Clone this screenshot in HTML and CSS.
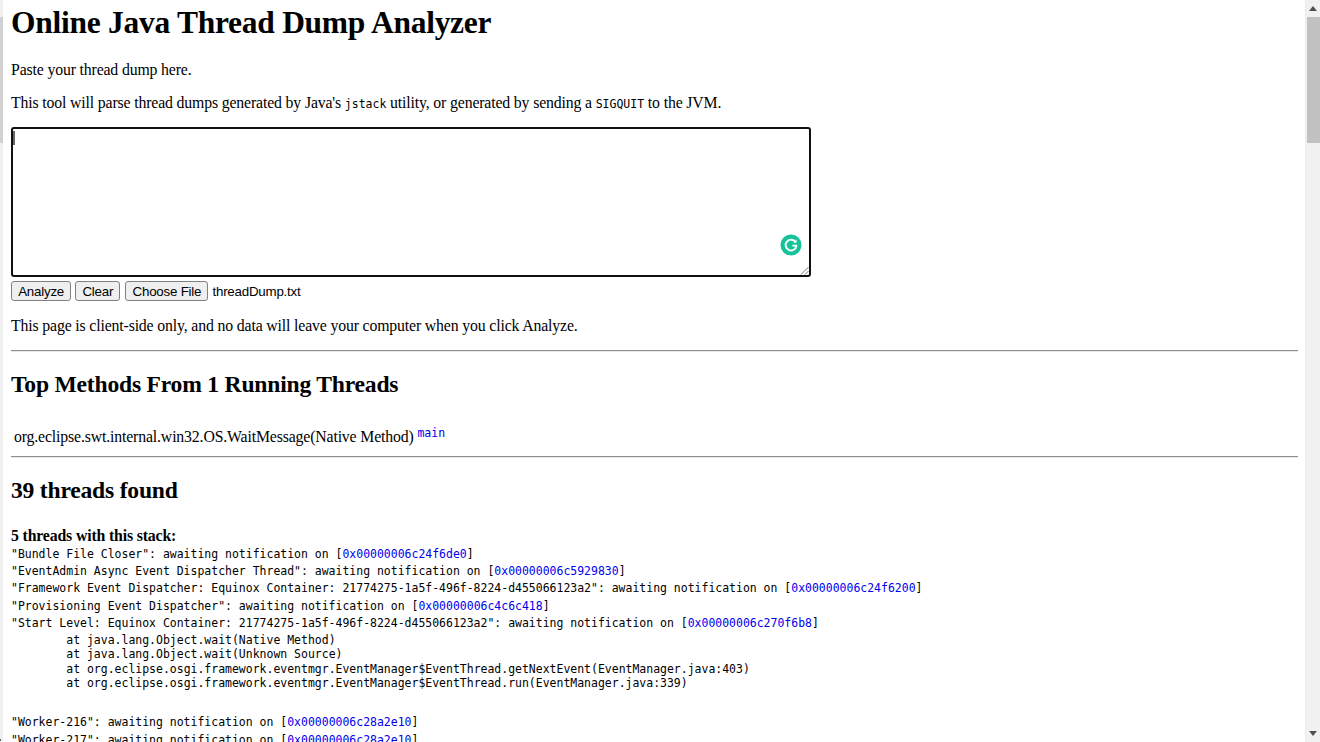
FILE: index.html
```html
<!DOCTYPE html>
<html lang="en">
<head>
<meta charset="utf-8">
<title>Online Java Thread Dump Analyzer</title>
<link rel="stylesheet" href="styles.css">
</head>
<body>
<div class="edge"></div>
<main class="page">
  <h1>Online Java Thread Dump Analyzer</h1>
  <p class="first">Paste your thread dump here.</p>
  <p class="intro">This tool will parse thread dumps generated by Java's <code>jstack</code> utility, or generated by sending a <code>SIGQUIT</code> to the JVM.</p>
  <div class="editor">
    <span class="caret"></span>
    <span class="grammarly">
      <svg viewBox="0 0 22 22" width="22" height="22"><circle cx="11" cy="11" r="10.5" fill="#15c39a"/><path d="M15.6 8.2A5.4 5.4 0 1 0 16.4 11.6H12.4" fill="none" stroke="#fff" stroke-width="1.9"/><path d="M13.4 8.6h3.2V5.4z" fill="#fff"/></svg>
    </span>
    <svg class="grip" viewBox="0 0 9 9" width="9" height="9"><path d="M8.5 1 1 8.5M8.5 5 5 8.5" stroke="#777" fill="none"/></svg>
  </div>
  <div class="controls">
    <button class="btn">Analyze</button>
    <button class="btn">Clear</button>
    <button class="btn file-btn">Choose File</button>
    <span class="filename">threadDump.txt</span>
  </div>
  <p class="note">This page is client-side only, and no data will leave your computer when you click Analyze.</p>
  <hr class="rule-a">
  <h2 class="h-top">Top Methods From 1 Running Threads</h2>
  <div class="method">org.eclipse.swt.internal.win32.OS.WaitMessage(Native Method) <a class="sup" href="#">main</a></div>
  <hr class="rule-b">
  <h2 class="h-found">39 threads found</h2>
  <div class="stack-title">5 threads with this stack:</div>
  <div class="line">"Bundle File Closer": awaiting notification on [<a href="#">0x00000006c24f6de0</a>]</div>
  <div class="line">"EventAdmin Async Event Dispatcher Thread": awaiting notification on [<a href="#">0x00000006c5929830</a>]</div>
  <div class="line">"Framework Event Dispatcher: Equinox Container: 21774275-1a5f-496f-8224-d455066123a2": awaiting notification on [<a href="#">0x00000006c24f6200</a>]</div>
  <div class="line">"Provisioning Event Dispatcher": awaiting notification on [<a href="#">0x00000006c4c6c418</a>]</div>
  <div class="line">"Start Level: Equinox Container: 21774275-1a5f-496f-8224-d455066123a2": awaiting notification on [<a href="#">0x00000006c270f6b8</a>]</div>
  <pre class="trace">	at java.lang.Object.wait(Native Method)
	at java.lang.Object.wait(Unknown Source)
	at org.eclipse.osgi.framework.eventmgr.EventManager$EventThread.getNextEvent(EventManager.java:403)
	at org.eclipse.osgi.framework.eventmgr.EventManager$EventThread.run(EventManager.java:339)</pre>
  <div class="line">"Worker-216": awaiting notification on [<a href="#">0x00000006c28a2e10</a>]</div>
  <div class="line">"Worker-217": awaiting notification on [<a href="#">0x00000006c28a2e10</a>]</div>
</main>
<aside class="scrollbar">
  <span class="arrow up"></span>
  <div class="track"><div class="thumb"></div></div>
  <span class="arrow down"></span>
</aside>
</body>
</html>
```
FILE: styles.css
```css
html, body { margin: 0; padding: 0; height: 742px; overflow: hidden; background: #fff; }
body { display: flex; font-family: "Liberation Serif", serif; font-size: 15.8px; letter-spacing: -0.15px; color: #000; }
.edge { position: relative; width: 3px; flex: none; background: linear-gradient(#f1f1f1 17px, #d2d2d2 17px, #d2d2d2 143px, #f1f1f1 143px); }
.edge::after { content: ""; position: absolute; left: 0; bottom: 1px; width: 1px; height: 2px; background: #666; }
.page { flex: 1; min-width: 0; padding: 4px 8px 0; overflow: hidden; }
h1 { font-size: 31.5px; letter-spacing: -0.27px; line-height: 37px; margin: 0 0 20px; }
p { margin: 0 0 15px; line-height: 18px; }
.intro { margin-bottom: 14px; }
code, .line, .trace, .sup { font-family: "DejaVu Sans Mono", monospace; letter-spacing: 0; }
code { font-size: 11.47px; }
.editor { position: relative; box-sizing: border-box; width: 800px; height: 150px; border: 2px solid #111; border-radius: 3px; background: #fff; }
.caret { position: absolute; left: 0; top: 2px; width: 2px; height: 14px; background: #666; }
.grammarly { position: absolute; right: 7px; top: 105px; width: 22px; height: 22px; }
.grammarly svg { display: block; }
.grip { position: absolute; right: 0; bottom: 0; }
.controls { display: flex; align-items: center; gap: 4px; margin-top: 4px; height: 20px; }
.btn { box-sizing: border-box; height: 20px; padding: 0 6.2px; font: 13.33px "Liberation Sans", sans-serif; letter-spacing: -0.22px; color: #000; background: #efefef; border: 1px solid #808080; border-radius: 3px; }
.file-btn { margin-left: 1px; }
.filename { font: 13.33px "Liberation Sans", sans-serif; letter-spacing: -0.22px; }
.note { margin: 16px 0 0; }
hr { border: 0; border-top: 1px solid #8f8f8f; border-bottom: 1px solid #e8e8e8; margin: 0; }
.rule-a { margin-top: 15px; }
h2 { font-size: 23.6px; letter-spacing: -0.21px; line-height: 28px; margin: 0; }
.h-top { margin-top: 18px; }
.method { margin: 30px 0 0 3px; line-height: 18px; }
.sup { font-size: 11.47px; vertical-align: 5px; line-height: 0; }
a { color: #00e; text-decoration: none; }
.rule-b { margin-top: 10px; }
.h-found { margin-top: 18px; }
.stack-title { font-weight: bold; margin-top: 23px; line-height: 18px; }
.line { font-size: 11.47px; line-height: 17.4px; white-space: pre; }
.stack-title + .line { margin-top: 0.5px; }
.trace { font-size: 11.47px; line-height: 14.6px; margin: 0 0 23.5px; tab-size: 8; }
.scrollbar { width: 14px; flex: none; display: flex; flex-direction: column; align-items: stretch; background: #f1f1f1; border-left: 1px solid #ececec; margin-left: -1px; }
.arrow { height: 17px; flex: none; display: flex; align-items: center; justify-content: center; }
.arrow::before { content: ""; border-left: 4px solid transparent; border-right: 4px solid transparent; }
.arrow.up::before { border-bottom: 5px solid #505050; }
.arrow.down::before { border-top: 5px solid #505050; }
.track { flex: 1; padding-left: 1px; }
.thumb { height: 126px; background: #c1c1c1; }
```
